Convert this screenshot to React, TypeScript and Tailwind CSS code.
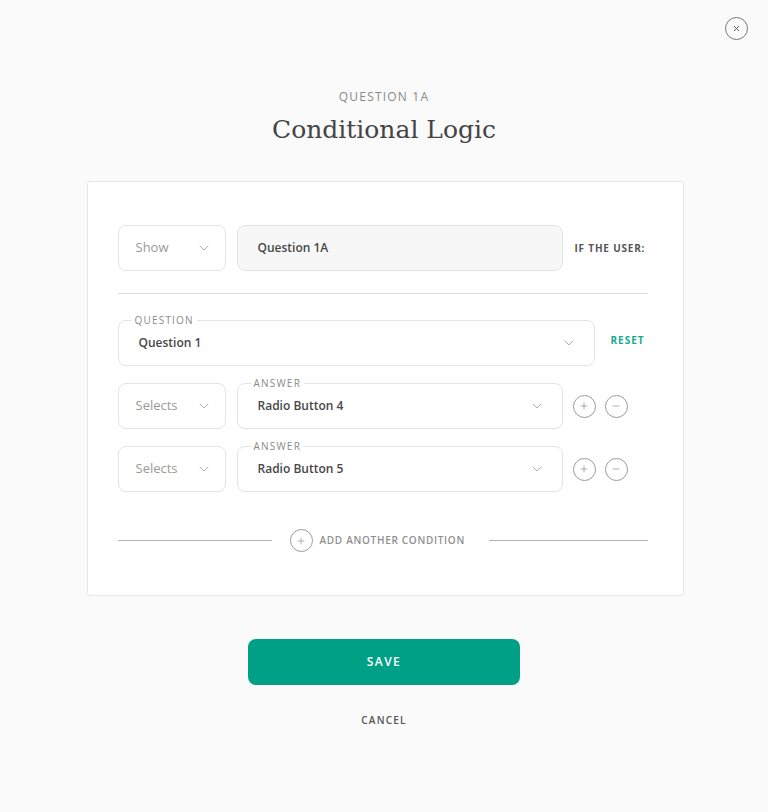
import { ChevronDown, Plus, Minus, X } from 'lucide-react'

const sans = { fontFamily: '"Open Sans", "Noto Sans", sans-serif' }

function Select({ label, width }: { label: string; width: string }) {
  return (
    <div className={`${width} h-[46px] shrink-0 rounded-[8px] border border-[#e4e4e4] bg-white flex items-center justify-between pl-[17px] pr-[13px]`}>
      <span className="text-[13px] text-[#9a9a9a]">{label}</span>
      <ChevronDown size={16} strokeWidth={1.2} className="text-[#9a9a9a]" />
    </div>
  )
}

function Field({ legend, value, width }: { legend: string; value: string; width: string }) {
  return (
    <div className={`${width} relative h-[46px] shrink-0 rounded-[8px] border border-[#e4e4e4] bg-white flex items-center justify-between pl-[20px] pr-[17px]`}>
      <span className="absolute -top-[7px] left-[13px] bg-white px-[3px] text-[10px] leading-[12px] tracking-[0.12em] text-[#8a8a8a]">
        {legend}
      </span>
      <span className="text-[12px] font-semibold text-[#474747]">{value}</span>
      <ChevronDown size={16} strokeWidth={1.2} className="text-[#9a9a9a]" />
    </div>
  )
}

function RoundBtn({ children }: { children: React.ReactNode }) {
  return (
    <button className="w-[23px] h-[23px] rounded-full border border-[#9a9a9a] flex items-center justify-center text-[#7a7a7a]">
      {children}
    </button>
  )
}

export default function App() {
  return (
    <div className="min-h-[812px] bg-[#fafafa] relative flex flex-col items-center" style={sans}>
      <button className="absolute top-[17px] right-[20px] w-[23px] h-[23px] rounded-full border border-[#777] flex items-center justify-center text-[#555]">
        <X size={9} strokeWidth={2.5} />
      </button>

      <div className="mt-[89px] text-[12px] tracking-[0.1em] text-[#8a8a8a] leading-[16px]">QUESTION 1A</div>
      <h1 className="mt-[8px] text-[25px] leading-[34px] text-[#444]" style={{ fontFamily: '"DejaVu Serif", "Liberation Serif", serif' }}>
        Conditional Logic
      </h1>

      <div className="mt-[34px] ml-[2px] w-[597px] rounded-[3px] border border-[#e6e6e6] bg-white pl-[30px] pr-[35px] pt-[43px] pb-[43px]">
        {/* show row */}
        <div className="flex items-center">
          <Select label="Show" width="w-[108px]" />
          <div className="ml-[11px] w-[326px] h-[46px] rounded-[8px] border border-[#e4e4e4] bg-[#f7f7f7] flex items-center pl-[20px]">
            <span className="text-[12px] font-semibold text-[#474747]">Question 1A</span>
          </div>
          <span className="ml-[12px] text-[10px] font-bold tracking-[0.08em] text-[#555]">IF THE USER:</span>
        </div>

        <div className="mt-[22px] h-px w-full bg-[#dedede]" />

        {/* question row */}
        <div className="mt-[26px] flex items-center">
          <Field legend="QUESTION" value="Question 1" width="w-[477px]" />
          <span className="ml-[16px] -mt-[6px] text-[10px] font-bold tracking-[0.1em] text-[#17a88f]">RESET</span>
        </div>

        {/* answer rows */}
        {['Radio Button 4', 'Radio Button 5'].map((v) => (
          <div key={v} className="mt-[17px] flex items-center">
            <Select label="Selects" width="w-[108px]" />
            <div className="ml-[11px]">
              <Field legend="ANSWER" value={v} width="w-[326px]" />
            </div>
            <div className="ml-[10px] flex gap-[9px]">
              <RoundBtn><Plus size={10} strokeWidth={1.5} /></RoundBtn>
              <RoundBtn><Minus size={10} strokeWidth={1.5} /></RoundBtn>
            </div>
          </div>
        ))}

        {/* add condition */}
        <div className="mt-[37px] flex items-center">
          <div className="w-[154px] h-px bg-[#b5b5b5]" />
          <div className="ml-[18px] w-[23px] h-[23px] rounded-full border border-[#9a9a9a] flex items-center justify-center text-[#8a8a8a]">
            <Plus size={10} strokeWidth={1.5} />
          </div>
          <span className="ml-[7px] text-[10px] font-semibold tracking-[0.07em] text-[#8f8f8f]">ADD ANOTHER CONDITION</span>
          <div className="ml-auto w-[159px] h-px bg-[#b5b5b5]" />
        </div>
      </div>

      <button className="mt-[43px] w-[272px] h-[46px] rounded-[8px] bg-[#00a086] text-white text-[12px] font-semibold tracking-[0.12em]">
        SAVE
      </button>
      <button className="mt-[28px] text-[10px] font-semibold tracking-[0.12em] text-[#555]">CANCEL</button>
    </div>
  )
}
